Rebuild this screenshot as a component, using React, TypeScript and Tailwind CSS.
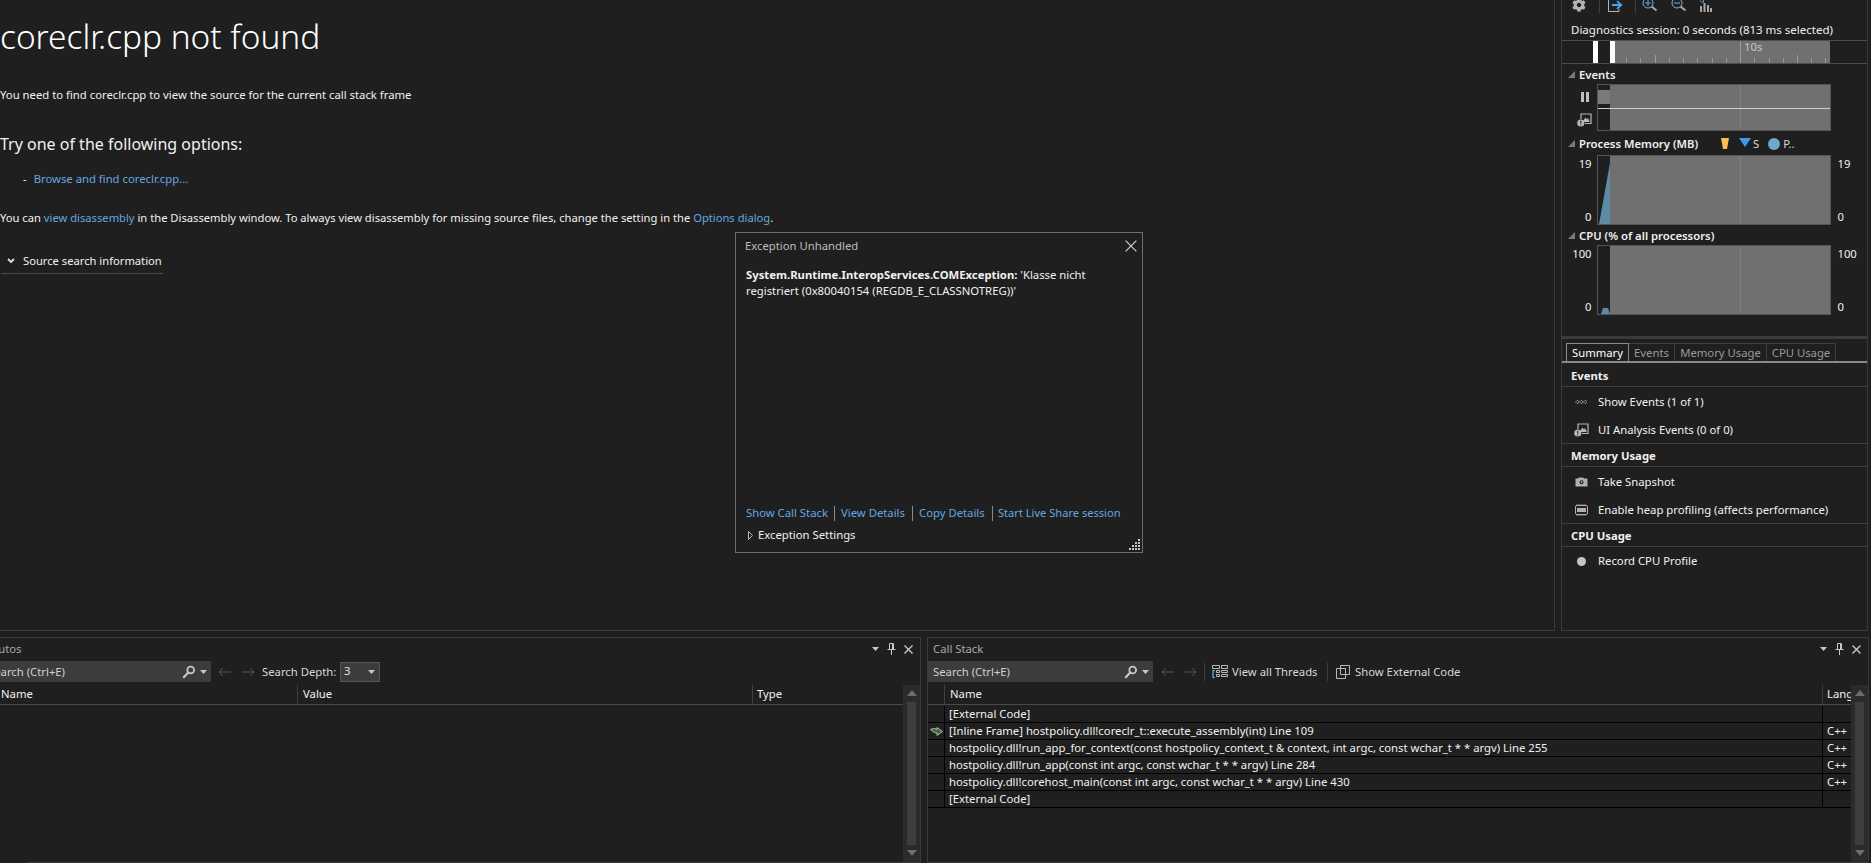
import React from "react";
import { FaCog } from "react-icons/fa";

const Tri = () => (
  <svg width="8" height="8" viewBox="0 0 8 8" className="shrink-0">
    <polygon points="8,0 8,7 1,7" fill="#7a7a7a" />
  </svg>
);
const Drop = ({ c = "#c8c8c8" }: { c?: string }) => (
  <svg width="7" height="4" viewBox="0 0 7 4" className="shrink-0">
    <polygon points="0,0 7,0 3.5,4" fill={c} />
  </svg>
);
const Mag = () => (
  <svg width="14" height="14" viewBox="0 0 14 14" className="shrink-0">
    <circle cx="8.7" cy="5" r="3.4" fill="none" stroke="#c8c8c8" strokeWidth="1.8" />
    <line x1="6" y1="7.8" x2="1.8" y2="12.2" stroke="#c8c8c8" strokeWidth="2.2" strokeLinecap="round" />
  </svg>
);
const Arrow = ({ right }: { right?: boolean }) => (
  <svg width="14" height="10" viewBox="0 0 14 10" className="shrink-0">
    <path d={right ? "M1 5H13M9 1L13 5L9 9" : "M13 5H1M5 1L1 5L5 9"} fill="none" stroke="#555555" strokeWidth="1" />
  </svg>
);
const Pin = () => (
  <svg width="9" height="12" viewBox="0 0 9 12" className="shrink-0">
    <path d="M2.5 0.5H6.5V6.5H2.5ZM5.5 0.5V6.5M0.5 6.5H8.5M4.5 7V12" fill="none" stroke="#c8c8c8" strokeWidth="1" />
  </svg>
);
const Close = ({ s = 9, c = "#c8c8c8", w = 1.5 }: { s?: number; c?: string; w?: number }) => (
  <svg width={s} height={s} viewBox="0 0 10 10" className="shrink-0">
    <path d="M0.5 0.5L9.5 9.5M9.5 0.5L0.5 9.5" fill="none" stroke={c} strokeWidth={w} />
  </svg>
);
const PanelButtons = () => (
  <div className="flex items-center ml-auto">
    <Drop />
    <span className="w-[8px]" />
    <Pin />
    <span className="w-[8px]" />
    <Close />
    <span className="w-[7px]" />
  </div>
);
const UiIcon = () => (
  <svg width="15" height="14" viewBox="0 0 15 14" className="shrink-0">
    <path d="M4 6V1H14V10.5H8" fill="none" stroke="#b8b8b8" strokeWidth="1.2" />
    <path d="M6 8L8.5 4.5L10 6.5L11 5L12.5 8V9H6Z" fill="#b8b8b8" />
    <circle cx="3.8" cy="10" r="3.6" fill="#b8b8b8" />
    <path d="M3.8 7.8V10.5M3.8 11.5V12.6" stroke="#1f1f1f" strokeWidth="1.1" />
  </svg>
);
const SmallEvents = () => (
  <svg width="12" height="6" viewBox="0 0 12 6" className="shrink-0">
    <path d="M0.5 3L2 1.5H3L4 3L3 4.5H2ZM4.5 3L6 1.5H7L8 3L7 4.5H6ZM8.5 3L10 1.5H11L12 3L11 4.5H10Z" fill="none" stroke="#a0a0a0" strokeWidth="0.8" />
  </svg>
);
const Camera = () => (
  <svg width="13" height="10" viewBox="0 0 13 10" className="shrink-0">
    <path d="M0.5 1.5H3L4 0.5H8L9 1.5H12.5V9.5H0.5Z" fill="#b0b0b0" />
    <circle cx="6.5" cy="5.2" r="2" fill="#1f1f1f" />
    <circle cx="6.5" cy="5.2" r="0.9" fill="#b0b0b0" />
  </svg>
);
const Chip = () => (
  <svg width="13" height="12" viewBox="0 0 13 12" className="shrink-0">
    <path d="M2 0V2M4 0V2M6 0V2M8 0V2M10 0V2M2 10V12M4 10V12M6 10V12M8 10V12M10 10V12" stroke="#a0a0a0" strokeWidth="0.8" />
    <rect x="0.5" y="1.5" width="12" height="9" rx="1.5" fill="none" stroke="#b0b0b0" />
    <rect x="2" y="4" width="9" height="4" fill="#b0b0b0" />
  </svg>
);

const Graph = ({ h, children }: { h: number; children?: React.ReactNode }) => (
  <svg width="235" height={h} viewBox={`0 0 235 ${h}`} className="block shrink-0">
    <rect x="0.5" y="0.5" width="233" height={h - 1} fill="#1f1f1f" stroke="#555555" />
    <rect x="13" y="1" width="220" height={h - 2} fill="#707070" />
    <line x1="143.5" y1="1" x2="143.5" y2={h - 1} stroke="#7f7f7f" />
    {children}
  </svg>
);

const Axis = ({ top, bottom, align }: { top: string; bottom: string; align: string }) => (
  <div className={`flex flex-col justify-between w-[30px] h-[70px] pt-[1px] text-[#f1f1f1] leading-[16px] ${align}`}>
    <span>{top}</span>
    <span>{bottom}</span>
  </div>
);

const Dialog = () => (
  <div className="absolute left-[735px] top-[232px] w-[408px] h-[321px] bg-[#1f1f1f] border border-[#6e6e6e] flex flex-col">
    <div className="flex items-center h-[26px] pl-[9px] pr-[5px]">
      <span className="text-[#bdbdbd] leading-[16px]">Exception Unhandled</span>
      <span className="ml-auto"><Close s={12} c="#cfcfcf" w={1} /></span>
    </div>
    <div className="mt-[8px] pl-[10px] w-[400px] text-[#f1f1f1] leading-[16px]">
      <span className="font-bold">System.Runtime.InteropServices.COMException:</span> 'Klasse nicht
      <br />
      registriert (0x80040154 (REGDB_E_CLASSNOTREG))'
    </div>
    <div className="mt-auto flex items-center h-[16px] pl-[10px] text-[#63a7e0] leading-[16px] whitespace-nowrap">
      <span className="w-[82px]">Show Call Stack</span>
      <span className="ml-[6px] mr-[6px] w-px h-[15px] bg-[#8a8a8a]" />
      <span className="w-[66px]">View Details</span>
      <span className="ml-[5px] mr-[6px] w-px h-[15px] bg-[#8a8a8a]" />
      <span className="w-[67px]">Copy Details</span>
      <span className="ml-[6px] mr-[5px] w-px h-[15px] bg-[#8a8a8a]" />
      <span className="text-[11.1px]">Start Live Share session</span>
    </div>
    <div className="flex items-center h-[16px] mt-[6px] mb-[9px] pl-[12px] text-[#f1f1f1] leading-[16px]">
      <svg width="5" height="9" viewBox="0 0 5 9" className="shrink-0">
        <path d="M0.5 0.5L4.5 4.5L0.5 8.5Z" fill="none" stroke="#b8b8b8" />
      </svg>
      <span className="ml-[5px]">Exception Settings</span>
    </div>
    <div className="absolute right-[1px] bottom-[1px]">
      <svg width="12" height="12" viewBox="0 0 12 12">
        <path d="M9 0h2v2H9ZM6 3h2v2H6ZM9 3h2v2H9ZM3 6h2v2H3ZM6 6h2v2H6ZM9 6h2v2H9ZM0 9h2v2H0ZM3 9h2v2H3ZM6 9h2v2H6ZM9 9h2v2H9Z" fill="#c4c4c4" />
      </svg>
    </div>
  </div>
);

const Doc = () => (
  <div className="relative w-[1555px] shrink-0 border-r border-b border-[#3a3a3a] flex flex-col text-[#f1f1f1] whitespace-nowrap">
    <div className="mt-[16px] text-[33.4px] leading-[40px] text-white font-light">coreclr.cpp not found</div>
    <div className="mt-[31px] leading-[16px]">You need to find coreclr.cpp to view the source for the current call stack frame</div>
    <div className="mt-[29px] text-[16px] leading-[24px]">Try one of the following options:</div>
    <div className="mt-[15px] leading-[16px] pl-[23px]">
      -<span className="ml-[7px] text-[#63a7e0]">Browse and find coreclr.cpp...</span>
    </div>
    <div className="mt-[23px] leading-[16px] text-[11.2px]">
      You can <span className="text-[#63a7e0]">view disassembly</span> in the Disassembly window. To always view disassembly for missing source files, change the setting in the <span className="text-[#63a7e0]">Options dialog</span>.
    </div>
    <div className="mt-[27px] ml-[1px] w-[162px] h-[21px] border-b border-[#4a4a4a] flex items-start">
      <svg width="8" height="6" viewBox="0 0 8 6" className="ml-[6px] mt-[5px] shrink-0">
        <path d="M1 1L4 4L7 1" fill="none" stroke="#e0e0e0" strokeWidth="1.8" />
      </svg>
      <span className="ml-[8px] leading-[16px] text-[11.2px]">Source search information</span>
    </div>
    <Dialog />
  </div>
);

const SectionHead = ({ children, h, pt }: { children: string; h: string; pt: string }) => (
  <div className={`${h} ${pt} pl-[9px] border-b border-[#3f3f3f] font-bold text-[#f1f1f1] leading-[16px]`}>{children}</div>
);
const Item = ({ icon, children }: { icon: React.ReactNode; children: string }) => (
  <div className="flex items-center h-[28px] shrink-0 text-[#f1f1f1]">
    <span className="w-[36px] flex justify-center pl-[5px] pr-[3px] shrink-0">{icon}</span>
    <span className="leading-[16px]">{children}</span>
  </div>
);

const Diagnostics = () => (
  <div className="w-[307px] shrink-0 ml-[6px] border-l border-r border-b border-[#3a3a3a] flex flex-col overflow-hidden whitespace-nowrap">
    <div className="h-[22px] flex items-start shrink-0">
      <span className="ml-[10px] -mt-[2px] text-[#b4b4b4]"><FaCog size={14} /></span>
      <span className="ml-[13px] w-px h-[13px] bg-[#3f3f3f]" />
      <svg width="15" height="12" viewBox="0 0 15 12" className="ml-[8px] shrink-0">
        <path d="M0.5 0V11.5H11V9" fill="none" stroke="#b4b4b4" />
        <path d="M4 5H13M9 1.2L13.2 5L9 8.8" fill="none" stroke="#4da3e8" strokeWidth="1.8" />
      </svg>
      <span className="ml-[12px] w-px h-[13px] bg-[#3f3f3f]" />
      <svg width="18" height="12" viewBox="0 0 18 12" className="ml-[5px] shrink-0">
        <circle cx="7" cy="3" r="5" fill="none" stroke="#a8a8a8" />
        <path d="M10.5 6.5L15.5 10.5" stroke="#a8a8a8" strokeWidth="2" />
        <path d="M4 3H10M7 0V6" stroke="#4da3e8" strokeWidth="1.2" />
      </svg>
      <svg width="18" height="12" viewBox="0 0 18 12" className="ml-[11px] shrink-0">
        <circle cx="7" cy="3" r="5" fill="none" stroke="#a8a8a8" />
        <path d="M10.5 6.5L15.5 10.5" stroke="#a8a8a8" strokeWidth="2" />
        <path d="M4 3H10" stroke="#4da3e8" strokeWidth="1.2" />
      </svg>
      <svg width="13" height="12" viewBox="0 0 13 12" className="ml-[11px] shrink-0">
        <path d="M1 6H3V12H1ZM4.5 3H6.5V12H4.5ZM8 5H10V12H8ZM11 8H13V12H11Z" fill="#a8a8a8" />
        <path d="M1 0.5L3 2.2H4.5V0" fill="none" stroke="#4da3e8" />
      </svg>
    </div>
    <div className="h-[18px] pl-[9px] text-[11.5px] text-[#f1f1f1] leading-[16px] shrink-0">Diagnostics session: 0 seconds (813 ms selected)</div>
    <div className="h-[24px] border-y border-[#4d4d4d] flex shrink-0">
      <span className="w-[31px] shrink-0" />
      <span className="w-[5px] bg-white shrink-0" />
      <span className="w-[12px] shrink-0" />
      <span className="w-[5px] bg-white shrink-0" />
      <div className="w-[215px] bg-[#707070] text-[#c4c4c4] leading-[14px] relative shrink-0">
        <svg width="215" height="22" viewBox="0 0 215 22" className="absolute left-0 top-0">
          <path d="M11.5 17V22M25.5 17V22M40.5 14V22M54.5 17V22M68.5 17V22M82.5 17V22M97.5 17V22M111.5 17V22M125.5 0V22M139.5 17V22M154.5 17V22M168.5 17V22M182.5 14V22M196.5 17V22M210.5 17V22" stroke="#9a9a9a" />
        </svg>
        <span className="absolute left-[129px] top-[-1px]">10s</span>
      </div>
    </div>
    <div className="mt-[3px] h-[16px] flex items-center pl-[5px] shrink-0">
      <Tri />
      <span className="ml-[4px] text-[#f1f1f1] leading-[16px] font-semibold">Events</span>
    </div>
    <div className="mt-[1px] flex h-[47px] shrink-0">
      <div className="w-[35px] shrink-0 flex flex-col items-center pl-[10px] pt-[8px]">
        <svg width="8" height="10" viewBox="0 0 8 10" className="shrink-0"><path d="M0 0H3V10H0ZM5 0H8V10H5Z" fill="#c0c0c0" /></svg>
        <span className="mt-[11px]"><UiIcon /></span>
      </div>
      <Graph h={47}>
        <rect x="1" y="6" width="12" height="14" fill="#7a7a7a" />
        <line x1="1" y1="24.5" x2="233" y2="24.5" stroke="#cfcfcf" />
      </Graph>
    </div>
    <div className="mt-[5px] h-[16px] flex items-center pl-[5px] shrink-0">
      <Tri />
      <span className="w-[120px] ml-[4px] text-[#f1f1f1] leading-[16px] font-semibold">Process Memory (MB)</span>
      <svg width="8" height="12" viewBox="0 0 8 12" className="ml-[22px] shrink-0"><path d="M0 0H8L6 11H2Z" fill="#f5c04f" /></svg>
      <svg width="12" height="9" viewBox="0 0 12 9" className="ml-[10px] -mt-[3px] shrink-0"><path d="M0 0H12L6 9Z" fill="#3a9cf0" /></svg>
      <span className="ml-[2px] text-[#d8d8d8] leading-[16px]">S</span>
      <span className="ml-[9px] w-[12px] h-[12px] rounded-full bg-[#6fa9c9] shrink-0" />
      <span className="ml-[3px] text-[#d8d8d8] leading-[16px]">P..</span>
    </div>
    <div className="mt-[3px] flex h-[70px] shrink-0">
      <Axis top="19" bottom="0" align="text-right" />
      <span className="w-[5px]" />
      <Graph h={70}>
        <path d="M2 69L13 8V69Z" fill="#5f8aa6" />
      </Graph>
      <span className="w-[6px]" />
      <Axis top="19" bottom="0" align="text-left" />
    </div>
    <div className="mt-[3px] h-[16px] flex items-center pl-[5px] shrink-0">
      <Tri />
      <span className="ml-[4px] text-[#f1f1f1] leading-[16px] font-semibold">CPU (% of all processors)</span>
    </div>
    <div className="mt-[1px] flex h-[70px] shrink-0">
      <Axis top="100" bottom="0" align="text-right" />
      <span className="w-[5px]" />
      <Graph h={70}>
        <path d="M4 69L6 63H11L13 69Z" fill="#5f8aa6" />
      </Graph>
      <span className="w-[6px]" />
      <Axis top="100" bottom="0" align="text-left" />
    </div>
    <div className="mt-[21px] h-[3px] bg-[#3a3a3a] shrink-0" />
    <div className="mt-[4px] h-[18px] flex pl-[4px] shrink-0">
      <span className="w-[63px] border border-[#8a8a8a] border-b-0 text-white text-center leading-[17px]">Summary</span>
      <span className="w-[46px] border-t border-r border-[#3f3f3f] text-[#9a9a9a] text-center leading-[17px]">Events</span>
      <span className="w-[92px] border-t border-r border-[#3f3f3f] text-[#9a9a9a] text-center leading-[17px]">Memory Usage</span>
      <span className="w-[69px] border-t border-r border-[#3f3f3f] text-[#9a9a9a] text-center leading-[17px]">CPU Usage</span>
    </div>
    <div className="h-[2px] bg-[#8a8a8a] shrink-0" />
    <SectionHead h="h-[24px]" pt="pt-[5px]">Events</SectionHead>
    <div className="h-[57px] border-b border-[#3f3f3f] pt-[1px] shrink-0">
      <Item icon={<SmallEvents />}>Show Events (1 of 1)</Item>
      <Item icon={<UiIcon />}>UI Analysis Events (0 of 0)</Item>
    </div>
    <SectionHead h="h-[23px]" pt="pt-[4px]">Memory Usage</SectionHead>
    <div className="h-[57px] border-b border-[#3f3f3f] pt-[1px] shrink-0">
      <Item icon={<Camera />}>Take Snapshot</Item>
      <Item icon={<Chip />}>Enable heap profiling (affects performance)</Item>
    </div>
    <SectionHead h="h-[23px]" pt="pt-[4px]">CPU Usage</SectionHead>
    <Item icon={<span className="block w-[9px] h-[9px] rounded-full bg-[#c4c4c4]" />}>Record CPU Profile</Item>
  </div>
);

const SearchBox = ({ w, neg }: { w: string; neg?: string }) => (
  <div className={`${w} h-[21px] bg-[#3c3c3c] flex items-center shrink-0 overflow-hidden pr-[4px]`}>
    <span className={`${neg ?? "ml-[5px]"} text-[#d0d0d0] leading-[16px]`}>Search (Ctrl+E)</span>
    <span className="ml-auto"><Mag /></span>
    <span className="ml-[4px]"><Drop /></span>
  </div>
);

const Scrollbar = () => (
  <div className="w-[17px] shrink-0 bg-[#2b2b2b] flex flex-col items-center">
    <svg width="10" height="6" viewBox="0 0 10 6" className="mt-[5px] shrink-0"><path d="M0 6L5 0L10 6Z" fill="#6e6e6e" /></svg>
    <div className="mt-[6px] w-[9px] h-[143px] bg-[#3e3e3e] shrink-0" />
    <svg width="10" height="6" viewBox="0 0 10 6" className="mt-[5px] shrink-0"><path d="M0 0L5 6L10 0Z" fill="#6e6e6e" /></svg>
  </div>
);

const Autos = () => (
  <div className="w-[921px] shrink-0 border-t border-r border-[#3a3a3a] flex flex-col whitespace-nowrap">
    <div className="h-[22px] flex items-center shrink-0">
      <span className="-ml-[9px] text-[#a8a8a8] leading-[16px]">Autos</span>
      <PanelButtons />
    </div>
    <div className="h-[21px] mt-[1px] flex items-center shrink-0">
      <SearchBox w="w-[211px]" neg="-ml-[12px]" />
      <span className="ml-[7px]"><Arrow /></span>
      <span className="ml-[9px]"><Arrow right /></span>
      <span className="ml-[7px] w-[72px] text-[#d8d8d8] leading-[16px]">Search Depth:</span>
      <div className="ml-[6px] w-[40px] h-[20px] bg-[#3c3c3c] border border-[#555555] flex items-center pl-[3px] pr-[4px] text-[#e0e0e0]">
        3<span className="ml-auto"><Drop /></span>
      </div>
    </div>
    <div className="flex flex-1 mt-[3px] min-h-0">
      <div className="flex-1 min-w-0">
        <div className="h-[20px] border-b border-[#4a4a4a] flex text-[#f1f1f1] leading-[18px]">
          <span className="w-[298px] border-r border-[#3f3f3f] pl-[1px]">Name</span>
          <span className="w-[455px] border-r border-[#3f3f3f] pl-[5px]">Value</span>
          <span className="pl-[4px]">Type</span>
        </div>
      </div>
      <Scrollbar />
    </div>
    <div className="h-px ml-[27px] bg-[#3a3a3a] shrink-0" />
  </div>
);

const rows = [
  { name: "[External Code]", lang: "" },
  { name: "[Inline Frame] hostpolicy.dll!coreclr_t::execute_assembly(int) Line 109", lang: "C++", cur: true },
  { name: "hostpolicy.dll!run_app_for_context(const hostpolicy_context_t & context, int argc, const wchar_t * * argv) Line 255", lang: "C++" },
  { name: "hostpolicy.dll!run_app(const int argc, const wchar_t * * argv) Line 284", lang: "C++" },
  { name: "hostpolicy.dll!corehost_main(const int argc, const wchar_t * * argv) Line 430", lang: "C++" },
  { name: "[External Code]", lang: "" },
];

const CallStack = () => (
  <div className="w-[942px] shrink-0 ml-[6px] border-t border-l border-r border-b border-[#3a3a3a] flex flex-col whitespace-nowrap">
    <div className="h-[22px] flex items-center shrink-0">
      <span className="ml-[5px] text-[#a8a8a8] leading-[16px]">Call Stack</span>
      <PanelButtons />
    </div>
    <div className="h-[21px] mt-[1px] flex items-center shrink-0">
      <SearchBox w="w-[225px]" />
      <span className="ml-[8px]"><Arrow /></span>
      <span className="ml-[8px]"><Arrow right /></span>
      <span className="ml-[7px] w-px h-[18px] bg-[#3f3f3f]" />
      <svg width="16" height="13" viewBox="0 0 16 13" className="ml-[7px] shrink-0">
        <path d="M0.5 0.5H7.5V3.5H0.5ZM9.5 0.5H15.5V3.5H9.5ZM9.5 5.5H15.5V7.5H9.5ZM9.5 9.5H15.5V11.5H9.5ZM4.5 5.5H7.5V7.5H4.5ZM4.5 9.5H7.5V11.5H4.5Z" fill="none" stroke="#b8b8b8" />
        <path d="M3 5.5H1V12.5H3" fill="none" stroke="#4db8e8" strokeWidth="1.2" />
      </svg>
      <span className="ml-[4px] w-[85px] text-[#d8d8d8] leading-[16px]">View all Threads</span>
      <span className="ml-[10px] w-px h-[18px] bg-[#3f3f3f]" />
      <svg width="14" height="14" viewBox="0 0 14 14" className="ml-[8px] shrink-0">
        <path d="M4.5 0.5H13.5V9.5H4.5ZM0.5 3.5H9.5V13.5H0.5Z" fill="#1f1f1f" stroke="#b8b8b8" />
      </svg>
      <span className="ml-[5px] text-[#d8d8d8] leading-[16px]">Show External Code</span>
    </div>
    <div className="flex flex-1 mt-[3px] min-h-0">
      <div className="flex-1 min-w-0 overflow-hidden">
        <div className="h-[20px] border-b border-[#4a4a4a] flex text-[#f1f1f1] leading-[18px]">
          <span className="w-[17px] border-r border-[#3f3f3f] shrink-0" />
          <span className="w-[878px] border-r border-[#3f3f3f] pl-[5px] shrink-0">Name</span>
          <span className="pl-[4px]">Language</span>
        </div>
        <div className="mt-[1px]">
          {rows.map((r, i) => (
            <div key={i} className="h-[17px] border-b border-black flex text-[#f1f1f1] leading-[16px]">
              <span className="w-[17px] border-r border-black flex items-center justify-center shrink-0">
                {r.cur && (
                  <svg width="13" height="9" viewBox="0 0 13 9">
                    <path d="M0.5 2.5C3 1 6 1.5 7 2.5V0.5L12.5 4.5L7 8.5V6C5 6 3 5 0.5 2.5Z" fill="#3f6b3a" stroke="#d0d0d0" strokeWidth="0.8" />
                  </svg>
                )}
              </span>
              <span className="w-[878px] border-r border-black pl-[4px] shrink-0">{r.name}</span>
              <span className="pl-[4px]">{r.lang}</span>
            </div>
          ))}
        </div>
      </div>
      <Scrollbar />
    </div>
  </div>
);

export default function App() {
  return (
    <div className="w-[1871px] h-[863px] bg-[#1f1f1f] flex flex-col overflow-hidden font-['Noto_Sans',sans-serif] text-[11.3px]">
      <div className="h-[631px] flex shrink-0">
        <Doc />
        <Diagnostics />
      </div>
      <div className="h-[226px] mt-[6px] flex shrink-0">
        <Autos />
        <CallStack />
      </div>
    </div>
  );
}
